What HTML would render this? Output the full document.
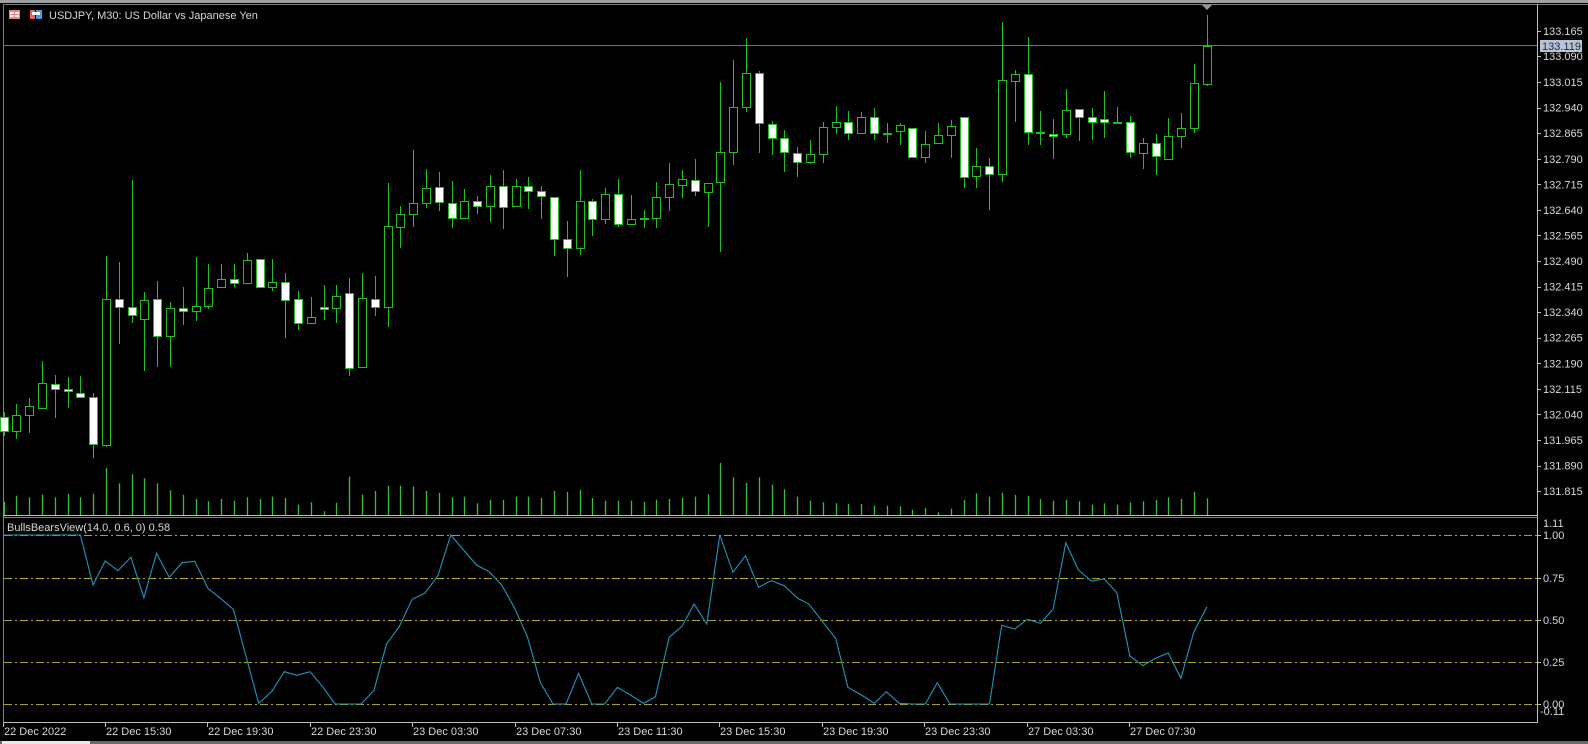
<!DOCTYPE html>
<html><head><meta charset="utf-8"><style>
html,body{margin:0;padding:0;background:#000;width:1588px;height:744px;overflow:hidden}
svg{display:block}
text{font-family:"Liberation Sans",sans-serif;font-size:11px;fill:#d8d8d8}
</style></head><body>
<svg id="s" width="1588" height="744" xmlns="http://www.w3.org/2000/svg">
<rect width="1588" height="744" fill="#000"/>
<rect x="0" y="0" width="1588" height="3" fill="#a0a0a0"/>
<line x1="3" y1="4.5" x2="1588" y2="4.5" stroke="#808080"/>
<line x1="3.5" y1="4" x2="3.5" y2="722" stroke="#808080"/>
<line x1="1537.5" y1="4" x2="1537.5" y2="722" stroke="#c0c0c0"/>
<line x1="3" y1="515.5" x2="1538" y2="515.5" stroke="#c0c0c0"/>
<line x1="3" y1="517.5" x2="1538" y2="517.5" stroke="#808080"/>
<line x1="3" y1="722.5" x2="1538" y2="722.5" stroke="#c0c0c0"/>
<rect x="0" y="741" width="1588" height="3" fill="#6a6a6a"/>
<rect x="2" y="741" width="88" height="3" fill="#e8e8e8"/>
<line x1="3" y1="45.5" x2="1537" y2="45.5" stroke="#6e747c"/>
<polygon points="1202,5 1212,5 1207,10" fill="#9098a0"/>
<g id="g"></g>
<rect x="9" y="10" width="11" height="9" fill="#f08080"/><rect x="10" y="12" width="4" height="2" fill="#fff"/><rect x="15" y="12" width="4" height="2" fill="#fff"/><rect x="10" y="15" width="4" height="2" fill="#fff"/><rect x="15" y="15" width="4" height="2" fill="#fff"/>
<rect x="30" y="10" width="5" height="9" fill="#f06060"/><rect x="36" y="10" width="6" height="9" fill="#40a0e0"/><rect x="32" y="12" width="8" height="3" fill="#fff"/>
<text x="49" y="19" fill="#e0e0e0">USDJPY, M30:  US Dollar vs Japanese Yen</text>
<text x="7" y="531">BullsBearsView(14.0, 0.6, 0) 0.58</text>
</svg>
<script>
var g=document.getElementById('g'),h='';
function X(i){return 3.5+12.8*i}
var C=[[412,417,431,436,1],[404,415,431,439,0],[398,406,415,433,0],[361,383,408,408,0],[375,384,389,418,1],[377,389,391,408,1],[376,393,397,397,1],[393,397,444,458,1],[256,299,445,447,0],[262,299,307,344,1],[180,307,315,323,1],[292,300,319,371,0],[281,299,336,367,1],[302,308,336,367,0],[287,308,311,325,1],[257,306,311,321,0],[264,288,306,309,0],[264,279,287,287,0],[264,279,283,287,1],[253,260,283,283,0],[259,259,287,288,1],[259,282,287,291,0],[273,282,300,338,1],[291,299,323,330,1],[297,317,323,323,0],[285,307,309,320,1],[285,296,308,323,0],[278,293,368,376,1],[273,298,367,367,0],[276,299,307,316,1],[183,226,307,327,0],
[206,214,227,248,0],[150,203,214,227,0],[169,188,203,208,0],[172,187,202,211,1],[181,203,218,228,1],[189,201,218,218,0],[196,201,206,214,1],[175,186,206,222,0],[170,186,207,229,1],[179,186,206,207,0],[177,186,191,209,1],[186,191,196,219,1],[197,197,239,256,1],[221,239,248,277,1],[170,201,248,255,0],[199,201,219,236,1],[188,194,219,224,0],[179,194,224,227,1],[195,219,224,224,0],[210,218,219,228,1],[182,197,218,228,0],[163,184,197,211,0],[170,179,185,198,0],[159,180,191,196,1],[183,183,192,227,0],[82,152,182,252,0],
[60,107,152,165,0],[38,73,107,112,0],[71,73,123,153,1],[121,124,138,155,1],[130,138,152,172,1],[147,153,162,177,1],[140,154,162,164,0],[122,127,154,163,0],[106,122,127,134,0],[111,122,133,140,1],[112,117,133,133,0],[108,117,133,140,1],[123,133,133,143,0],[123,125,131,145,0],[128,128,157,158,1],[131,144,157,163,0],[123,135,143,143,0],[120,126,135,158,0],[117,117,177,188,1],[148,166,176,188,0],[158,166,174,210,1],[22,80,174,182,0],[70,74,81,122,0],[37,74,132,145,1],[111,132,133,145,1],[119,134,136,159,1],[89,110,134,138,0],[109,109,117,141,1],[108,117,122,140,1],[91,119,122,138,1],[107,122,123,123,1],[116,122,152,158,1],[138,143,153,169,0],[134,143,156,175,1],[118,136,159,159,0],[113,128,136,148,0],[64,83,128,133,0],[15,46,84,86,0]];
var V=[40,58,53,61,53,64,53,64,141,95,122,110,95,74,61,48,41,48,43,53,48,55,51,31,38,11,37,115,61,72,88,88,86,72,66,53,55,35,46,45,55,55,51,72,69,76,51,
43,43,43,40,46,48,51,55,62,156,113,96,113,91,77,55,43,38,35,33,33,28,28,26,16,21,8,19,45,65,55,67,60,57,48,43,46,41,31,35,31,38,41,45,53,48,70,50];
// volumes
for(var i=0;i<V.length;i++){var x=Math.round(X(i))+0.5,hh=V[i]/3;h+='<line x1="'+x+'" y1="515" x2="'+x+'" y2="'+(515-hh).toFixed(1)+'" stroke="#3cc03c" stroke-width="1.3"/>';}
// candles
for(var i=0;i<C.length;i++){var c=C[i],x=Math.round(X(i))+0.5;
h+='<line x1="'+x+'" y1="'+c[0]+'" x2="'+x+'" y2="'+c[3]+'" stroke="#20c020"/>';
var bh=Math.max(c[2]-c[1],1);
h+='<rect x="'+(x-4)+'" y="'+(c[1]+0.5)+'" width="8" height="'+bh+'" fill="'+(c[4]?'#fff':'#000')+'" stroke="#20c020"/>';}
// price axis
var P=['133.165','133.090','133.015','132.940','132.865','132.790','132.715','132.640','132.565','132.490','132.415','132.340','132.265','132.190','132.115','132.040','131.965','131.890','131.815'];
for(var k=0;k<P.length;k++){var y=31+k*25.56;if(k==1)y=56;
h+='<line x1="1537" y1="'+Math.round(y)+'.5" x2="1541" y2="'+Math.round(y)+'.5" stroke="#c0c0c0"/><text x="1543" y="'+(y+4).toFixed(1)+'">'+P[k]+'</text>';}
h+='<rect x="1540" y="40" width="42" height="12" fill="#b8c4d4"/><text x="1542" y="50" fill="#1a2a4a" style="fill:#1a2a4a">133.119</text>';
// indicator levels
var L=[[535,'1.00'],[578,'0.75'],[620,'0.50'],[662,'0.25'],[704,'0.00']];
for(var k=0;k<L.length;k++){h+='<line x1="4" y1="'+L[k][0]+'.5" x2="1537" y2="'+L[k][0]+'.5" stroke="#a8a030" stroke-dasharray="8,3,2,3"/><line x1="1537" y1="'+L[k][0]+'.5" x2="1541" y2="'+L[k][0]+'.5" stroke="#c0c0c0"/><text x="1543" y="'+(L[k][0]+4)+'">'+L[k][1]+'</text>';}
h+='<text x="1543" y="527">1.11</text><text x="1540" y="715">-0.11</text>';
// indicator line
var A=[[10,45],[210,45],[243,195],[275,123],[308,152],[342,112],[376,233],[409,100],[442,172],[476,128],[509,124],[543,205],[576,235],[610,268],[643,410],[676,550],[710,515],[743,455],[776,466],[810,455],[843,500],[876,552],[910,552],[943,552],[977,512],[1010,372],[1043,320],[1077,238],[1110,220],[1144,168],[1178,45],[1211,90],[1245,135],[1278,155],[1311,195],[1345,265],[1378,350],[1412,488],[1445,552],[1479,552],[1512,460],[1546,552]];
var B=[[12,552],[44,502],[77,525],[110,550],[140,530],[175,352],[208,318],[238,252],[270,312],[303,45],[336,157],[368,107],[401,202],[433,182],[466,197],[500,235],[528,252],[563,305],[596,355],[627,502],[661,525],[694,550],[724,515],[757,550],[790,552],[823,552],[853,488],[885,552],[920,552],[953,552],[985,552],[1016,316],[1049,327],[1081,298],[1114,310],[1146,268],[1178,68],[1210,150],[1243,183],[1275,177],[1307,218],[1340,408],[1373,437],[1405,415],[1437,399],[1469,475],[1502,335],[1535,260]];
var pts=[];A.forEach(function(p){pts.push((p[0]/2.613).toFixed(1)+','+(520+p[1]/3).toFixed(1))});
B.forEach(function(p){pts.push((600+p[0]/2.529).toFixed(1)+','+(520+p[1]/3).toFixed(1))});
h+='<polyline points="'+pts.join(' ')+'" fill="none" stroke="#1e96be" stroke-width="1.1"/>';
// time axis
var T=['22 Dec 2022','22 Dec 15:30','22 Dec 19:30','22 Dec 23:30','23 Dec 03:30','23 Dec 07:30','23 Dec 11:30','23 Dec 15:30','23 Dec 19:30','23 Dec 23:30','27 Dec 03:30','27 Dec 07:30'];
for(var k=0;k<T.length;k++){var x=k==0?3:Math.round(105+(k-1)*102.4);
h+='<line x1="'+x+'.5" y1="722" x2="'+x+'.5" y2="727" stroke="#c0c0c0"/><text x="'+(x+1)+'" y="735">'+T[k]+'</text>';}
g.innerHTML=h;
</script>
</body></html>
